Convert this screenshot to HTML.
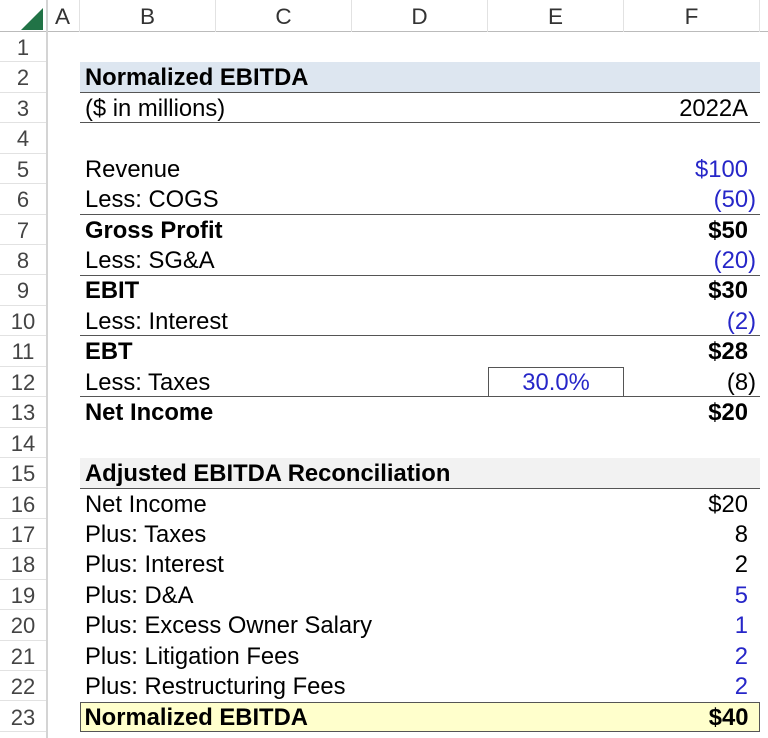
<!DOCTYPE html>
<html><head><meta charset="utf-8"><style>
body{margin:0;width:768px;height:738px;background:#fff;position:relative;overflow:hidden;font-family:"Liberation Sans",Arial,sans-serif;font-size:23.8px;color:#000}
.a{position:absolute}
.hdr{position:absolute;top:0;height:32px;border-right:1px solid #e2e2e2;text-align:center;line-height:34px;color:#333;font-size:22.5px;box-sizing:border-box}
.rn{position:absolute;left:0;width:46px;text-align:center;color:#444;border-bottom:1px solid #e2e2e2;box-sizing:border-box;font-size:22px}
.r{position:absolute;left:80px;width:680px;box-sizing:border-box}
.l{position:absolute;left:5px}
.v{position:absolute;right:12px}
.p{position:absolute;right:4px}
.b{font-weight:bold}
.blue{color:#2626c8}
.bb{border-bottom:1.5px solid #555}
</style></head><body>
<div class="a" style="left:0;top:0;width:768px;height:32px;border-bottom:1.5px solid #bbb;box-sizing:border-box"></div>
<div class="a" style="left:46px;top:0;width:1.5px;height:738px;background:#d4d4d4"></div>
<svg class="a" style="left:21px;top:8px" width="22" height="22"><polygon points="22,0 22,22 0,22" fill="#217346"/></svg>
<div class="hdr" style="left:46px;width:34px">A</div>
<div class="hdr" style="left:80px;width:136px">B</div>
<div class="hdr" style="left:216px;width:136px">C</div>
<div class="hdr" style="left:352px;width:136px">D</div>
<div class="hdr" style="left:488px;width:136px">E</div>
<div class="hdr" style="left:624px;width:136px">F</div>

<div class="rn" style="top:32px;height:30.4px;line-height:32px">1</div>
<div class="rn" style="top:62.4px;height:30.4px;line-height:32px">2</div>
<div class="rn" style="top:92.9px;height:30.4px;line-height:32px">3</div>
<div class="rn" style="top:123.3px;height:30.4px;line-height:32px">4</div>
<div class="rn" style="top:153.7px;height:30.4px;line-height:32px">5</div>
<div class="rn" style="top:184.2px;height:30.4px;line-height:32px">6</div>
<div class="rn" style="top:214.6px;height:30.4px;line-height:32px">7</div>
<div class="rn" style="top:245px;height:30.4px;line-height:32px">8</div>
<div class="rn" style="top:275.4px;height:30.4px;line-height:32px">9</div>
<div class="rn" style="top:305.9px;height:30.4px;line-height:32px">10</div>
<div class="rn" style="top:336.3px;height:30.4px;line-height:32px">11</div>
<div class="rn" style="top:366.7px;height:30.4px;line-height:32px">12</div>
<div class="rn" style="top:397.2px;height:30.4px;line-height:32px">13</div>
<div class="rn" style="top:427.6px;height:30.4px;line-height:32px">14</div>
<div class="rn" style="top:458px;height:30.4px;line-height:32px">15</div>
<div class="rn" style="top:488.5px;height:30.4px;line-height:32px">16</div>
<div class="rn" style="top:518.9px;height:30.4px;line-height:32px">17</div>
<div class="rn" style="top:549.3px;height:30.4px;line-height:32px">18</div>
<div class="rn" style="top:579.7px;height:30.4px;line-height:32px">19</div>
<div class="rn" style="top:610.2px;height:30.4px;line-height:32px">20</div>
<div class="rn" style="top:640.6px;height:30.4px;line-height:32px">21</div>
<div class="rn" style="top:671px;height:30.4px;line-height:32px">22</div>
<div class="rn" style="top:701.5px;height:30.4px;line-height:32px">23</div>

<div class="r bb" style="top:62.4px;height:30.5px;line-height:31px;background:#dde6f0"><span class="l b">Normalized EBITDA</span></div>
<div class="r bb" style="top:92.9px;height:30.5px;line-height:31px"><span class="l">($ in millions)</span><span class="v">2022A</span></div>
<div class="r" style="top:153.7px;height:30.5px;line-height:31px"><span class="l">Revenue</span><span class="v blue">$100</span></div>
<div class="r bb" style="top:184.2px;height:30.5px;line-height:31px"><span class="l">Less: COGS</span><span class="p blue">(50)</span></div>
<div class="r" style="top:214.6px;height:30.5px;line-height:31px"><span class="l b">Gross Profit</span><span class="v b">$50</span></div>
<div class="r bb" style="top:245px;height:30.5px;line-height:31px"><span class="l">Less: SG&amp;A</span><span class="p blue">(20)</span></div>
<div class="r" style="top:275.4px;height:30.5px;line-height:31px"><span class="l b">EBIT</span><span class="v b">$30</span></div>
<div class="r bb" style="top:305.9px;height:30.5px;line-height:31px"><span class="l">Less: Interest</span><span class="p blue">(2)</span></div>
<div class="r" style="top:336.3px;height:30.5px;line-height:31px"><span class="l b">EBT</span><span class="v b">$28</span></div>
<div class="r bb" style="top:366.7px;height:30.5px;line-height:31px"><span class="l">Less: Taxes</span><span class="p">(8)</span></div>
<div class="a blue" style="left:488px;top:367px;width:136px;height:30px;border:1.5px solid #555;border-bottom:none;box-sizing:border-box;text-align:center;line-height:29px">30.0%</div>
<div class="r" style="top:397.2px;height:30.5px;line-height:31px"><span class="l b">Net Income</span><span class="v b">$20</span></div>
<div class="r bb" style="top:458px;height:30.5px;line-height:31px;background:#f2f2f2"><span class="l b">Adjusted EBITDA Reconciliation</span></div>
<div class="r" style="top:488.5px;height:30.5px;line-height:31px"><span class="l">Net Income</span><span class="v">$20</span></div>
<div class="r" style="top:518.9px;height:30.5px;line-height:31px"><span class="l">Plus: Taxes</span><span class="v">8</span></div>
<div class="r" style="top:549.3px;height:30.5px;line-height:31px"><span class="l">Plus: Interest</span><span class="v">2</span></div>
<div class="r" style="top:579.7px;height:30.5px;line-height:31px"><span class="l">Plus: D&amp;A</span><span class="v blue">5</span></div>
<div class="r" style="top:610.2px;height:30.5px;line-height:31px"><span class="l">Plus: Excess Owner Salary</span><span class="v blue">1</span></div>
<div class="r" style="top:640.6px;height:30.5px;line-height:31px"><span class="l">Plus: Litigation Fees</span><span class="v blue">2</span></div>
<div class="r" style="top:671px;height:30.5px;line-height:31px"><span class="l">Plus: Restructuring Fees</span><span class="v blue">2</span></div>
<div class="r" style="top:701.5px;height:30.5px;line-height:29px;background:#ffffcc;border:1.5px solid #555"><span class="l b" style="left:3.5px">Normalized EBITDA</span><span class="v b" style="right:10.5px">$40</span></div>
</body></html>
